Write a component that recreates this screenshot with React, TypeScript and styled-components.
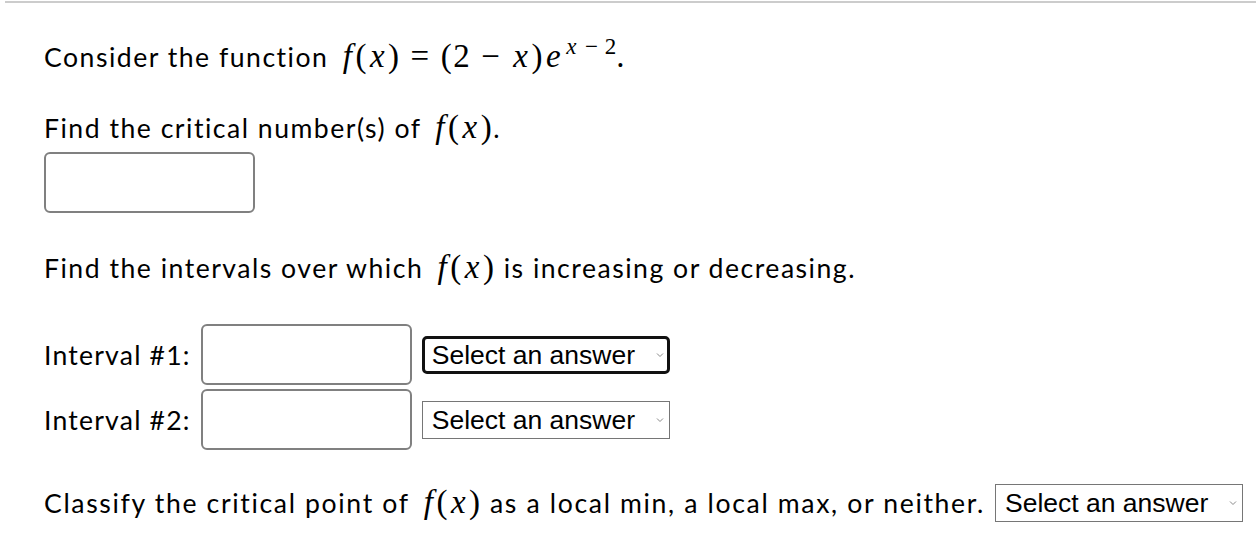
import React from 'react';
import styled, { createGlobalStyle } from 'styled-components';

const GlobalStyle = createGlobalStyle`
    body {
        margin: 0;
        background: #fff;
        color: #000;
        font-family: Lato, "Noto Sans", sans-serif;
    }
`;

const TopRule = styled.div`
    height: 2px;
    margin: 1px 0 0 5px;
    background: #cccccc;
`;

const Page = styled.div`
    display: flex;
    flex-direction: column;
    padding-left: 44px;
`;

const Para = styled.div<{ $top: number }>`
    margin-top: ${(p) => p.$top}px;
    font-size: 26.6px;
    letter-spacing: 1.5px;
    line-height: 40px;
    height: 40px;
    white-space: nowrap;
`;

const Row = styled.div<{ $top: number; $spacing?: number }>`
    display: flex;
    align-items: center;
    gap: 10px;
    margin-top: ${(p) => p.$top}px;
    font-size: 26.6px;
    letter-spacing: ${(p) => p.$spacing ?? 1.5}px;
    white-space: nowrap;
`;

const Label = styled.span`
    line-height: 40px;
`;

const Answer = styled.input<{ $top?: number }>`
    box-sizing: border-box;
    width: 211px;
    height: 61px;
    margin-top: ${(p) => p.$top ?? 0}px;
    border: 2px solid #808080;
    border-radius: 6px;
    background: #fff;
    outline: none;
`;

const SelectWrap = styled.div`
    position: relative;
    display: inline-flex;
    letter-spacing: 0;
`;

const Select = styled.select<{ $focused?: boolean }>`
    box-sizing: border-box;
    appearance: none;
    width: 248px;
    height: 38px;
    padding: 0 0 0 9px;
    font-family: "Liberation Sans", Arial, sans-serif;
    font-size: 26.5px;
    color: #000;
    background: #fff;
    border: ${(p) => (p.$focused ? '3px solid #111' : '1px solid #767676')};
    border-radius: ${(p) => (p.$focused ? '5px' : '0')};
    padding-left: ${(p) => (p.$focused ? '7px' : '9px')};
    outline: none;
`;

const Chevron = styled.svg`
    position: absolute;
    right: 6px;
    top: 50%;
    width: 8px;
    height: 6px;
    margin-top: -3px;
    pointer-events: none;
`;

const Math = styled.span`
    font-family: "Liberation Serif", "DejaVu Serif", serif;
    font-size: 33px;
    letter-spacing: 1.5px;
    margin-left: 4px;
`;

const I = styled.i`
    font-style: italic;
    padding: 0 2px;
`;

const Op = styled.span`
    padding: 0 10px;
`;

const Sup = styled.sup`
    font-size: 23px;
    vertical-align: 13px;
    line-height: 0;
    letter-spacing: 0;
    word-spacing: 1px;
`;

const Fx = () => (
    <Math>
        <I>f</I>(<I>x</I>)
    </Math>
);

const Dropdown: React.FC<{ focused?: boolean }> = ({ focused }) => (
    <SelectWrap>
        <Select $focused={focused} defaultValue="">
            <option value="">Select an answer</option>
            <option value="inc">Increasing</option>
            <option value="dec">Decreasing</option>
        </Select>
        <Chevron viewBox="0 0 8 6">
            <path d="M1 1.5 L4 4.5 L7 1.5" fill="none" stroke="#8a8a8a" strokeWidth="1" />
        </Chevron>
    </SelectWrap>
);

const App: React.FC = () => {
    return (
        <>
            <GlobalStyle />
            <TopRule />
            <Page>
                <Para $top={33}>
                    Consider the function{' '}
                    <Math>
                        <I>f</I>(<I>x</I>)<Op>=</Op>(2<Op>−</Op><I>x</I>)<I>e</I>
                        <Sup>
                            <I>x</I> − 2
                        </Sup>
                        .
                    </Math>
                </Para>
                <Para $top={31}>
                    Find the critical number(s) of <Fx />.
                </Para>
                <Answer $top={5} />
                <Para $top={34}>
                    Find the intervals over which <Fx /> is increasing or decreasing.
                </Para>
                <Row $top={37} $spacing={1.2}>
                    <Label>Interval #1:</Label>
                    <Answer />
                    <Dropdown focused />
                </Row>
                <Row $top={4} $spacing={1.2}>
                    <Label>Interval #2:</Label>
                    <Answer />
                    <Dropdown />
                </Row>
                <Row $top={32} $spacing={1.65}>
                    <Label>
                        Classify the critical point of <Fx /> as a local min, a local max, or neither.
                    </Label>
                    <Dropdown />
                </Row>
            </Page>
        </>
    );
};

export default App;
